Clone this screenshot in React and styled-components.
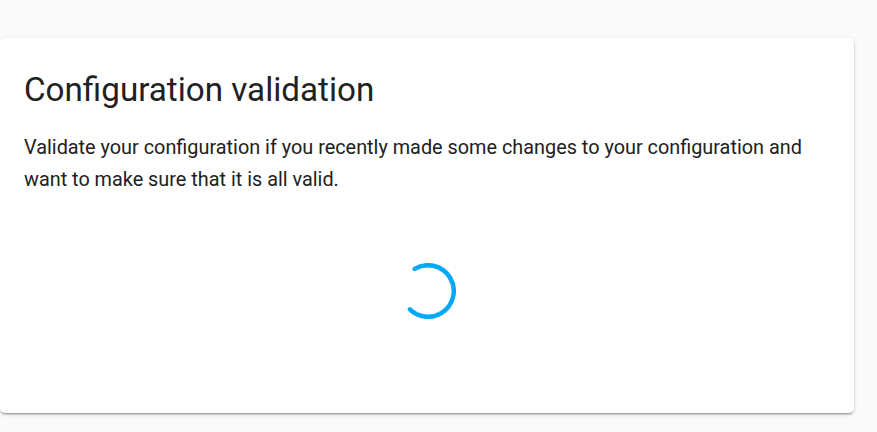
import styled, { createGlobalStyle } from "styled-components";

const GlobalStyle = createGlobalStyle`
  html, body {
    margin: 0;
    padding: 0;
    background: #fafafa;
    font-family: Roboto, "Noto Sans", sans-serif;
  }
`;

export default function App() {
  return (
    <Page>
      <GlobalStyle />
      <Card>
        <Header>Configuration validation</Header>
        <Content>
          Validate your configuration if you recently made some changes to your
          configuration and want to make sure that it is all valid.
        </Content>
        <SpinnerBox>
          <Spinner />
        </SpinnerBox>
      </Card>
    </Page>
  );
}

function Spinner() {
  return (
    <svg width="56" height="56" viewBox="0 0 56 56">
      <circle
        cx="28"
        cy="28"
        r="25.75"
        fill="none"
        stroke="#03a9f4"
        strokeWidth="4.5"
        strokeLinecap="round"
        strokeDasharray="114 200"
        transform="rotate(-121 28 28)"
      />
    </svg>
  );
}

const Page = styled.div`
  padding-top: 38px;
  width: 877px;
  height: 432px;
  box-sizing: border-box;
  overflow: hidden;
`;

const Card = styled.div`
  width: 854px;
  background: #fff;
  border-radius: 5px;
  box-shadow: 0 2px 2px 0 rgba(0, 0, 0, 0.14), 0 1px 5px 0 rgba(0, 0, 0, 0.12),
    0 3px 1px -2px rgba(0, 0, 0, 0.2);
  display: flex;
  flex-direction: column;
`;

const Header = styled.div`
  padding: 32px 24px 0 24px;
  font-size: 33.2px;
  line-height: 40px;
  color: #212121;
`;

const Content = styled.div`
  padding: 22px 24px 0 24px;
  font-size: 19.85px;
  line-height: 32px;
  color: #212121;
`;

const SpinnerBox = styled.div`
  display: flex;
  justify-content: center;
  padding: 67px 0 94px 0;
  margin-left: 2px;
`;
